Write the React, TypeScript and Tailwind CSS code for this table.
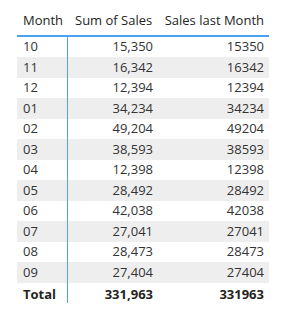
import React from "react";

const rows: [string, string, string][] = [
  ["10", "15,350", "15350"],
  ["11", "16,342", "16342"],
  ["12", "12,394", "12394"],
  ["01", "34,234", "34234"],
  ["02", "49,204", "49204"],
  ["03", "38,593", "38593"],
  ["04", "12,398", "12398"],
  ["05", "28,492", "28492"],
  ["06", "42,038", "42038"],
  ["07", "27,041", "27041"],
  ["08", "28,473", "28473"],
  ["09", "27,404", "27404"],
];

export default function App() {
  return (
    <div
      className="w-[286px] h-[321px] bg-white text-[#333333] text-[13px]"
      style={{ fontFamily: '"Open Sans", "Noto Sans", sans-serif' }}
    >
      <div className="pl-[17px] pt-[6px] w-[269px]">
        <div className="flex h-[31px] items-center border-b-2 border-[#4aa3f2] text-[#252423]">
          <div className="w-[51px] pl-[6px]">Month</div>
          <div className="w-[87px] pl-[7px]">Sum of Sales</div>
          <div className="flex-1 text-right pr-[5px]">Sales last Month</div>
        </div>
        {rows.map((r, i) => (
          <div
            key={r[0]}
            className={`flex items-center ${i % 2 === 1 ? "bg-[#eeeeee] h-[21px]" : "h-[20px]"}`}
          >
            <div className="w-[51px] pl-[6px] h-full flex items-center border-r border-[#4aa3f2]">{r[0]}</div>
            <div className="w-[87px] text-right pr-[2px]">{r[1]}</div>
            <div className="flex-1 text-right pr-[5px]">{r[2]}</div>
          </div>
        ))}
        <div className="flex items-center h-[20px] font-bold text-[#252423]">
          <div className="w-[51px] pl-[6px] pt-[3px] h-full flex items-center border-r border-[#4aa3f2]">Total</div>
          <div className="w-[87px] text-right pr-[2px] pt-[3px]">331,963</div>
          <div className="flex-1 text-right pr-[5px] pt-[3px]">331963</div>
        </div>
      </div>
    </div>
  );
}
